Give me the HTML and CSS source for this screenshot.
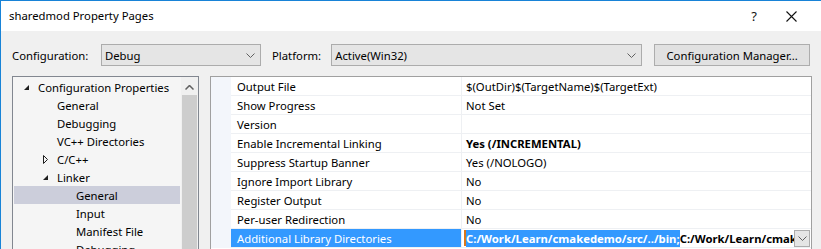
FILE: index.html
```html
<!DOCTYPE html>
<html lang="en">
<head>
    <meta charset="UTF-8">
    <title>sharedmod Property Pages</title>
    <link rel="stylesheet" href="styles.css">
</head>
<body>
    <div class="window">
        <div class="titlebar">
            <span class="title">sharedmod Property Pages</span>
            <span class="help">?</span>
            <svg class="close" viewBox="0 0 11 11">
                <path d="M0.5 0.5L10.5 10.5M10.5 0.5L0.5 10.5"/>
            </svg>
        </div>

        <div class="content">
            <!-- Строка конфигурации -->
            <div class="config-row">
                <span class="label">Configuration:</span>
                <div class="combo combo-config">
                    <span>Debug</span>
                    <svg class="chevron" viewBox="0 0 9 5"><path d="M0.5 0.5L4.5 4.5L8.5 0.5"/></svg>
                </div>
                <span class="label label-platform">Platform:</span>
                <div class="combo combo-platform">
                    <span>Active(Win32)</span>
                    <svg class="chevron" viewBox="0 0 9 5"><path d="M0.5 0.5L4.5 4.5L8.5 0.5"/></svg>
                </div>
                <button class="btn">Configuration Manager...</button>
            </div>

            <div class="main">
                <!-- Дерево страниц -->
                <div class="tree">
                    <div class="tree-items">
                        <div class="tree-row lvl0">
                            <svg class="arrow" viewBox="0 0 6 6"><path d="M6 0V6H0Z"/></svg>
                            Configuration Properties
                        </div>
                        <div class="tree-row lvl1">General</div>
                        <div class="tree-row lvl1">Debugging</div>
                        <div class="tree-row lvl1">VC++ Directories</div>
                        <div class="tree-row lvl1">
                            <svg class="arrow arrow-closed" viewBox="0 0 5 9"><path d="M0.5 0.5L4.5 4.5L0.5 8.5Z"/></svg>
                            C/C++
                        </div>
                        <div class="tree-row lvl1">
                            <svg class="arrow" viewBox="0 0 6 6"><path d="M6 0V6H0Z"/></svg>
                            Linker
                        </div>
                        <div class="tree-row lvl2 selected">General</div>
                        <div class="tree-row lvl2">Input</div>
                        <div class="tree-row lvl2">Manifest File</div>
                        <div class="tree-row lvl2">Debugging</div>
                    </div>
                    <div class="scrollbar">
                        <svg class="scroll-up" viewBox="0 0 9 5"><path d="M0.5 4.5L4.5 0.5L8.5 4.5"/></svg>
                        <div class="thumb"></div>
                    </div>
                </div>

                <!-- Таблица свойств -->
                <div class="grid">
                    <div class="grid-row"><div class="gutter"></div><div class="name">Output File</div><div class="value">$(OutDir)$(TargetName)$(TargetExt)</div></div>
                    <div class="grid-row"><div class="gutter"></div><div class="name">Show Progress</div><div class="value">Not Set</div></div>
                    <div class="grid-row"><div class="gutter"></div><div class="name">Version</div><div class="value"></div></div>
                    <div class="grid-row"><div class="gutter"></div><div class="name">Enable Incremental Linking</div><div class="value bold">Yes (/INCREMENTAL)</div></div>
                    <div class="grid-row"><div class="gutter"></div><div class="name">Suppress Startup Banner</div><div class="value">Yes (/NOLOGO)</div></div>
                    <div class="grid-row"><div class="gutter"></div><div class="name">Ignore Import Library</div><div class="value">No</div></div>
                    <div class="grid-row"><div class="gutter"></div><div class="name">Register Output</div><div class="value">No</div></div>
                    <div class="grid-row"><div class="gutter"></div><div class="name">Per-user Redirection</div><div class="value">No</div></div>
                    <div class="grid-row active">
                        <div class="gutter"></div>
                        <div class="name">Additional Library Directories</div>
                        <div class="value edit">
                            <span class="edit-text"><span class="caret"></span><span class="sel">C:/Work/Learn/cmakedemo/src/../bin;</span>C:/Work/Learn/cmakedemo/lib;%(AdditionalLibraryDirectories)</span>
                            <span class="drop-btn">
                                <svg class="chevron" viewBox="0 0 9 5"><path d="M0.5 0.5L4.5 4.5L8.5 0.5"/></svg>
                            </span>
                        </div>
                    </div>
                </div>
            </div>
        </div>
    </div>
</body>
</html>
```
FILE: styles.css
```css
/* Общие стили окна */
html, body {
    margin: 0;
    padding: 0;
}

body {
    font-family: "Noto Sans", "Open Sans", sans-serif;
    font-size: 11.3px;
    color: #000;
    background: #f0f0f0;
    overflow: hidden;
}

.window {
    width: 821px;
    height: 249px;
    box-sizing: border-box;
    border-top: 1px solid #1883d7;
    border-left: 1px solid #1883d7;
    display: flex;
    flex-direction: column;
    overflow: hidden;
}

.titlebar {
    height: 30px;
    flex: none;
    background: #fff;
    display: flex;
    align-items: center;
    padding-left: 8px;
}

.title {
    flex: 1;
    font-size: 11.3px;
    padding-bottom: 1px;
}

.help {
    font-size: 13px;
    margin-right: 29px;
    color: #111;
}

.close {
    width: 11px;
    height: 11px;
    margin-right: 24px;
    stroke: #111;
    stroke-width: 1.1;
    fill: none;
}

.content {
    flex: 1;
    padding: 13px 0 0 11px;
    display: flex;
    flex-direction: column;
}

/* Строка конфигурации */
.config-row {
    display: flex;
    align-items: center;
    height: 22px;
}

.label {
    width: 89px;
}

.label-platform {
    width: auto;
    margin: 0 10px 0 11px;
}

.combo {
    box-sizing: border-box;
    height: 22px;
    background: #e5e5e5;
    border: 1px solid #acacac;
    display: flex;
    align-items: center;
    justify-content: space-between;
    padding: 0 5px 0 3px;
}

.combo-config {
    width: 160px;
}

.combo-platform {
    width: 311px;
}

.chevron {
    width: 9px;
    height: 5px;
    stroke: #606060;
    stroke-width: 1;
    fill: none;
}

.btn {
    margin-left: 12px;
    width: 156px;
    height: 22px;
    box-sizing: border-box;
    background: #e1e1e1;
    border: 1px solid #adadad;
    font-family: inherit;
    font-size: inherit;
    color: #000;
    padding: 0;
}

/* Основная часть */
.main {
    flex: 1;
    display: flex;
    gap: 11px;
    margin-top: 10px;
    min-height: 0;
}

.tree {
    width: 187px;
    box-sizing: border-box;
    border: 1px solid #828790;
    border-bottom: none;
    background: #f5f5f5;
    display: flex;
}

.tree-items {
    flex: 1;
    padding: 1px 1px 0 1px;
}

.tree-row {
    height: 18px;
    line-height: 19px;
    white-space: nowrap;
    position: relative;
}

.lvl0 { padding-left: 24px; }
.lvl1 { padding-left: 43px; }
.lvl2 { padding-left: 62px; }

.tree-row.selected {
    background: #cccedb;
}

.arrow {
    position: absolute;
    width: 5px;
    height: 5px;
    top: 7px;
    fill: #1e1e1e;
}

.lvl0 .arrow { left: 10px; }
.lvl1 .arrow { left: 29px; }

.arrow.arrow-closed {
    width: 5px;
    height: 9px;
    top: 5px;
    fill: none;
    stroke: #1e1e1e;
    stroke-width: 1;
}

.scrollbar {
    width: 17px;
    background: #f0f0f0;
    display: flex;
    flex-direction: column;
    align-items: center;
}

.scroll-up {
    width: 9px;
    height: 5px;
    margin: 8px 0 5px;
    stroke: #606060;
    stroke-width: 1.5;
    fill: none;
}

.thumb {
    flex: 1;
    width: 15px;
    background: #cdcdcd;
}

/* Таблица свойств */
.grid {
    width: 602px;
    box-sizing: border-box;
    border: 1px solid #a0a0a0;
    border-bottom: none;
    background: #fff;
}

.grid-row {
    display: flex;
    height: 19px;
}

.gutter {
    width: 20px;
    flex: none;
    background: #f3f6fb;
}

.name, .value {
    box-sizing: border-box;
    height: 19px;
    line-height: 19px;
    border-bottom: 1px solid #eef0f3;
    white-space: nowrap;
    overflow: hidden;
}

.name {
    width: 231px;
    flex: none;
    padding-left: 6px;
    border-right: 1px solid #eef0f3;
}

.value {
    flex: 1;
    padding-left: 4px;
}

.bold {
    font-weight: bold;
}

.grid-row.active .name {
    background: #3399ff;
    color: #fff;
}

.value.edit {
    display: flex;
    align-items: center;
    padding: 0 1px 0 2px;
    font-weight: bold;
}

.edit-text {
    flex: 1;
    overflow: hidden;
    white-space: nowrap;
    display: flex;
    align-items: center;
}

.caret {
    width: 2px;
    height: 16px;
    background: #d9771b;
    flex: none;
}

.sel {
    background: #3399ff;
    color: #fff;
    line-height: 17px;
}

.drop-btn {
    width: 16px;
    height: 17px;
    box-sizing: border-box;
    background: #e5e5e5;
    border: 1px solid #acacac;
    display: flex;
    align-items: center;
    justify-content: center;
    flex: none;
}
```
